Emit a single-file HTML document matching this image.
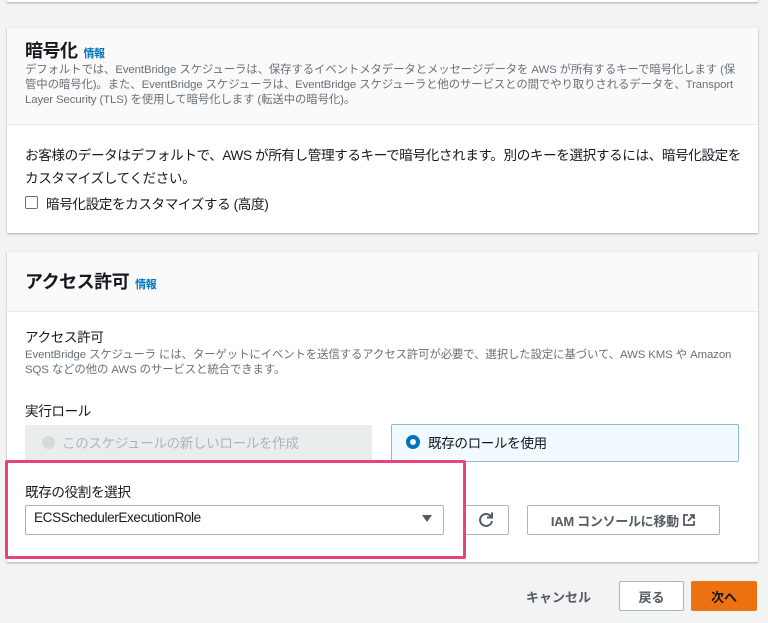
<!DOCTYPE html>
<html><head><meta charset="utf-8"><style>
*{box-sizing:border-box;margin:0;padding:0}
body{width:768px;height:623px;background:#f2f3f3;position:relative;overflow:hidden;font-family:"Liberation Sans","Noto Sans CJK JP",sans-serif;color:#16191f}
.a{position:absolute;white-space:nowrap}
.card{position:absolute;left:7px;width:751px;background:#fff;box-shadow:0 1px 2px rgba(0,0,0,.3)}
.hd{background:#fafafa;border-bottom:1px solid #eaeded;position:absolute;left:0;top:0;width:100%}
.t{font-size:18px;font-weight:bold;letter-spacing:-0.5px}
.i{font-size:11px;font-weight:bold;color:#0073bb;margin-left:6px}
.d{font-size:11.4px;color:#687078;line-height:15px;letter-spacing:-0.1px}
.b{font-size:13.6px;letter-spacing:-0.4px}
.btn{position:absolute;border:1px solid #aab7b8;background:#fff;border-radius:2px;font-size:13px;font-weight:bold;color:#545b64;display:flex;align-items:center;justify-content:center}
</style></head><body>
<div class="card" style="top:-10px;height:12px"></div>

<div class="card" style="top:28px;height:205px">
 <div class="hd" style="height:97px"></div>
</div>
<div class="a t" style="left:25px;top:37px">暗号化<span class="i">情報</span></div>
<div class="a d" style="left:25px;top:63px">デフォルトでは、EventBridge スケジューラは、保存するイベントメタデータとメッセージデータを AWS が所有するキーで暗号化します (保<br>管中の暗号化)。また、EventBridge スケジューラは、EventBridge スケジューラと他のサービスとの間でやり取りされるデータを、Transport<br>Layer Security (TLS) を使用して暗号化します (転送中の暗号化)。</div>
<div class="a b" style="left:25px;top:144px;line-height:23px">お客様のデータはデフォルトで、AWS が所有し管理するキーで暗号化されます。別のキーを選択するには、暗号化設定を<br>カスタマイズしてください。</div>
<div class="a" style="left:25px;top:196px;width:13px;height:13px;border:1px solid #687078;border-radius:2px"></div>
<div class="a b" style="left:46px;top:193px">暗号化設定をカスタマイズする (高度)</div>

<div class="card" style="top:252px;height:310px">
 <div class="hd" style="height:60px"></div>
</div>
<div class="a t" style="left:25px;top:268px">アクセス許可<span class="i">情報</span></div>
<div class="a b" style="left:25px;top:326px">アクセス許可</div>
<div class="a d" style="left:25px;top:348px">EventBridge スケジューラ には、ターゲットにイベントを送信するアクセス許可が必要で、選択した設定に基づいて、AWS KMS や Amazon<br>SQS などの他の AWS のサービスと統合できます。</div>
<div class="a b" style="left:25px;top:400px">実行ロール</div>
<div class="a" style="left:25px;top:425px;width:347px;height:37px;background:#eaeded"></div>
<div class="a" style="left:42px;top:436px;width:13px;height:13px;border-radius:50%;background:#d5dbdb"></div>
<div class="a b" style="left:62px;top:432px;color:#aab7b8">このスケジュールの新しいロールを作成</div>
<div class="a" style="left:391px;top:424px;width:348px;height:38px;background:#f1faff;border:1px solid #8fb8cf;border-radius:2px"></div>
<div class="a" style="left:406px;top:435px;width:14px;height:14px;border-radius:50%;border:4px solid #0073bb;background:#fff"></div>
<div class="a b" style="left:428px;top:432px">既存のロールを使用</div>

<div class="a b" style="left:25px;top:481px">既存の役割を選択</div>
<div class="a" style="left:25px;top:505px;width:419px;height:30px;border:1px solid #aab7b8;border-radius:2px;background:#fff"></div>
<div class="a b" style="left:34px;top:510px">ECSSchedulerExecutionRole</div>
<div class="a" style="left:422px;top:515px;width:0;height:0;border-left:5px solid transparent;border-right:5px solid transparent;border-top:7px solid #545b64"></div>
<div class="btn" style="left:463px;top:505px;width:46px;height:30px"><svg width="18" height="18" viewBox="0 0 18 18"><path d="M14 5.5A6 6 0 1 0 15 10" fill="none" stroke="#545b64" stroke-width="2"/><path d="M15 1.5v5h-5" fill="none" stroke="#545b64" stroke-width="2"/></svg></div>
<div class="btn" style="left:527px;top:505px;width:193px;height:30px;letter-spacing:-0.3px">IAM コンソールに移動&nbsp;<svg width="14" height="14" viewBox="0 0 14 14"><path d="M6 2H2v10h10V8M8 2h4v4M12 2L6 8" fill="none" stroke="#545b64" stroke-width="1.8"/></svg></div>
<div class="a" style="left:5px;top:460px;width:461px;height:99px;border:3px solid #e8437c;border-radius:2px"></div>

<div class="a" style="left:526px;top:587px;font-size:13px;font-weight:bold;color:#545b64">キャンセル</div>
<div class="btn" style="left:619px;top:581px;width:65px;height:30px">戻る</div>
<div class="btn" style="left:691px;top:581px;width:66px;height:30px;background:#ec7211;border-color:#ec7211;color:#16191f">次へ</div>
</body></html>
